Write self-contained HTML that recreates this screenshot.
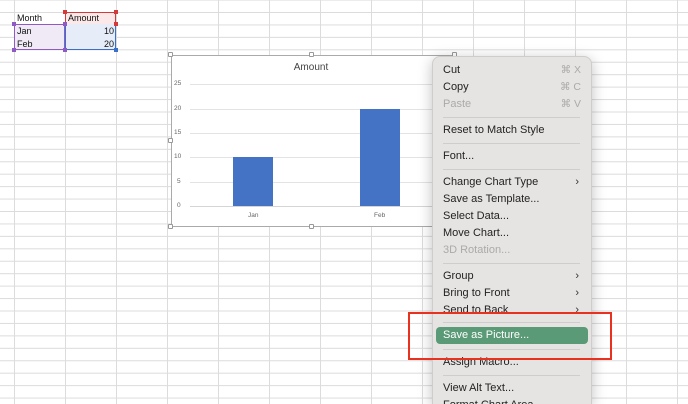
<!DOCTYPE html>
<html><head><style>
*{margin:0;padding:0;box-sizing:border-box}
html,body{width:688px;height:404px;overflow:hidden}
body{position:relative;background:#fff;font-family:"Liberation Sans",Arial,sans-serif}
.grid{position:absolute;inset:0;background-image:linear-gradient(to right,#dcdcdc 1px,transparent 1px),linear-gradient(to bottom,#dcdcdc 1px,transparent 1px);background-size:51px 12.45px;background-position:14px 12px}
.a{position:absolute}
.c{position:absolute;font-size:9px;color:#111;line-height:12px}
.menu{position:absolute;left:432px;top:56px;width:160px;height:348px;overflow:hidden;background:#e6e4e2;border:1px solid #cfcdcb;border-bottom:none;border-radius:8px 8px 0 0;box-shadow:0 3px 14px rgba(0,0,0,.25)}
.mi{position:absolute;left:10px;font-size:11px;color:#222;line-height:13px}
.dis{color:#aaa}
.sc{position:absolute;right:10px;font-size:10.5px;color:#aaa;line-height:13px}
.ar{position:absolute;right:12px;font-size:11px;color:#333;line-height:13px}
.sep{position:absolute;left:10px;right:11px;height:1px;background:#cfcdcb}
.h{position:absolute;width:5px;height:5px;background:#fff;border:1px solid #999;border-radius:1px}
.q{position:absolute;width:4px;height:4px}
</style></head><body>
<div class="grid"></div>
<div class="a" style="left:14px;top:24px;width:51px;height:26px;background:#efeaf5;border:1.5px solid #8e5bc4"></div>
<div class="a" style="left:65px;top:12px;width:51px;height:13px;background:#fbe8e8;border:1.5px solid #d33a3a"></div>
<div class="a" style="left:65px;top:24px;width:51px;height:26px;background:#e6edf8;border:1.5px solid #3b70c9;border-top:none"></div>
<div class="q" style="left:12px;top:22px;background:#8e5bc4"></div>
<div class="q" style="left:12px;top:48px;background:#8e5bc4"></div>
<div class="q" style="left:63px;top:48px;background:#8e5bc4"></div>
<div class="q" style="left:63px;top:22px;background:#8e5bc4"></div>
<div class="q" style="left:63px;top:10px;background:#d33a3a"></div>
<div class="q" style="left:114px;top:10px;background:#d33a3a"></div>
<div class="q" style="left:114px;top:22px;background:#d33a3a"></div>
<div class="q" style="left:114px;top:48px;background:#3b70c9"></div>
<div class="c" style="left:17px;top:12px">Month</div>
<div class="c" style="left:68px;top:12px">Amount</div>
<div class="c" style="left:17px;top:25px">Jan</div>
<div class="c" style="left:17px;top:38px">Feb</div>
<div class="c" style="left:65px;top:25px;width:49px;text-align:right">10</div>
<div class="c" style="left:65px;top:38px;width:49px;text-align:right">20</div>
<div class="a" style="left:171px;top:55px;width:285px;height:172px;background:#fff;border:1px solid #aaa"></div>
<div class="a" style="left:171px;top:62px;width:280px;text-align:center;font-size:10px;color:#444">Amount</div>
<div class="a" style="left:190px;top:84px;width:250px;height:1px;background:#e3e3e3"></div>
<div class="a" style="left:190px;top:109px;width:250px;height:1px;background:#e3e3e3"></div>
<div class="a" style="left:190px;top:133px;width:250px;height:1px;background:#e3e3e3"></div>
<div class="a" style="left:190px;top:157px;width:250px;height:1px;background:#e3e3e3"></div>
<div class="a" style="left:190px;top:182px;width:250px;height:1px;background:#e3e3e3"></div>
<div class="a" style="left:190px;top:206px;width:250px;height:1px;background:#d5d5d5"></div>
<div class="a" style="left:174px;top:80px;font-size:6.5px;color:#666;line-height:8px">25</div>
<div class="a" style="left:174px;top:105px;font-size:6.5px;color:#666;line-height:8px">20</div>
<div class="a" style="left:174px;top:129px;font-size:6.5px;color:#666;line-height:8px">15</div>
<div class="a" style="left:174px;top:153px;font-size:6.5px;color:#666;line-height:8px">10</div>
<div class="a" style="left:177px;top:178px;font-size:6.5px;color:#666;line-height:8px">5</div>
<div class="a" style="left:177px;top:202px;font-size:6.5px;color:#666;line-height:8px">0</div>
<div class="a" style="left:233px;top:157px;width:40px;height:49px;background:#4472c4"></div>
<div class="a" style="left:360px;top:109px;width:40px;height:97px;background:#4472c4"></div>
<div class="a" style="left:248px;top:212px;font-size:6.5px;color:#666">Jan</div>
<div class="a" style="left:374px;top:212px;font-size:6.5px;color:#666">Feb</div>
<div class="h" style="left:168px;top:52px"></div>
<div class="h" style="left:309px;top:52px"></div>
<div class="h" style="left:168px;top:138px"></div>
<div class="h" style="left:168px;top:224px"></div>
<div class="h" style="left:309px;top:224px"></div>
<div class="h" style="left:452px;top:52px"></div>
<div class="menu">
<div class="mi" style="top:7px">Cut</div><div class="sc" style="top:7px">⌘ X</div>
<div class="mi" style="top:24px">Copy</div><div class="sc" style="top:24px">⌘ C</div>
<div class="mi dis" style="top:41px">Paste</div><div class="sc" style="top:41px">⌘ V</div>
<div class="sep" style="top:60px"></div>
<div class="mi" style="top:67px">Reset to Match Style</div>
<div class="sep" style="top:86px"></div>
<div class="mi" style="top:93px">Font...</div>
<div class="sep" style="top:112px"></div>
<div class="mi" style="top:119px">Change Chart Type</div><div class="ar" style="top:119px">›</div>
<div class="mi" style="top:136px">Save as Template...</div>
<div class="mi" style="top:153px">Select Data...</div>
<div class="mi" style="top:170px">Move Chart...</div>
<div class="mi dis" style="top:187px">3D Rotation...</div>
<div class="sep" style="top:206px"></div>
<div class="mi" style="top:213px">Group</div><div class="ar" style="top:213px">›</div>
<div class="mi" style="top:230px">Bring to Front</div><div class="ar" style="top:230px">›</div>
<div class="mi" style="top:247px">Send to Back</div><div class="ar" style="top:247px">›</div>
<div class="sep" style="top:265px"></div>
<div class="a" style="left:3px;top:270px;width:152px;height:17px;background:#5a9a76;border-radius:4px"></div>
<div class="mi" style="top:272px;color:#fff">Save as Picture...</div>
<div class="sep" style="top:292px"></div>
<div class="mi" style="top:299px">Assign Macro...</div>
<div class="sep" style="top:318px"></div>
<div class="mi" style="top:325px">View Alt Text...</div>
<div class="mi" style="top:342px">Format Chart Area...</div>
</div>
<div class="a" style="left:408px;top:312px;width:204px;height:48px;border:2px solid #e8321f"></div>
</body></html>
